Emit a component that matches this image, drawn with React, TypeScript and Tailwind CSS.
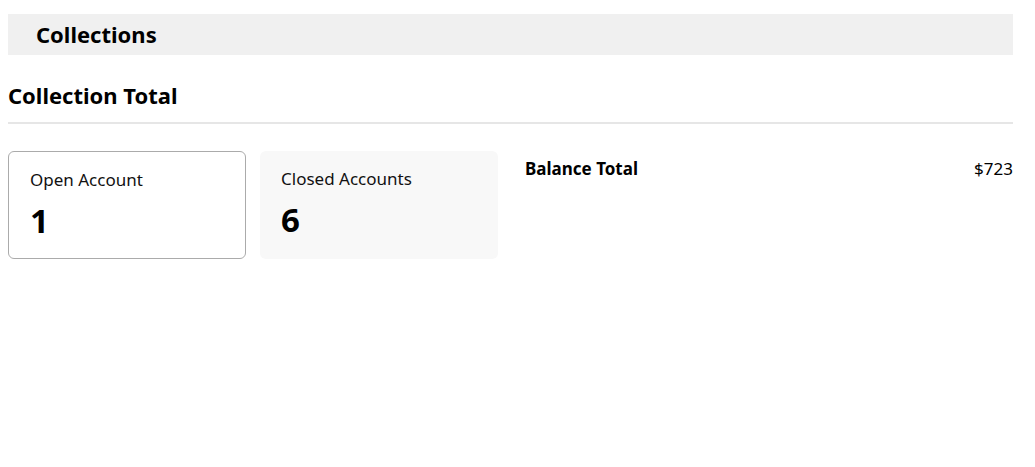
import React from 'react';

const StatCard: React.FC<{ label: string; value: string; outlined?: boolean }> = ({ label, value, outlined }) => (
    <div
        className={
            outlined
                ? 'w-[238px] h-[108px] rounded-md border border-[#ababab] bg-white px-[21px] pt-[15px]'
                : 'w-[238px] h-[108px] rounded-md bg-[#f8f8f8] px-[21px] pt-[15px]'
        }
    >
        <div className="text-[17px] leading-[26px] text-[#111]">{label}</div>
        <div className="mt-[8px] text-[33px] leading-[40px] font-bold text-black">{value}</div>
    </div>
);

export default function App() {
    return (
        <div className="min-h-screen bg-white pl-[8px] pr-[22px] pt-[14px] text-black" style={{ fontFamily: '"Noto Sans", sans-serif' }}>
            {/* Section header */}
            <div className="h-[41px] bg-[#f0f0f0] pl-[28px] flex items-center">
                <h2 className="text-[22px] font-bold">Collections</h2>
            </div>

            <h3 className="mt-[25px] text-[22px] leading-[30px] font-bold">Collection Total</h3>
            <div className="mt-[12px] h-[2px] bg-[#e6e6e6]" />

            <div className="mt-[27px] flex">
                <StatCard label="Open Account" value="1" outlined />
                <div className="ml-[14px]">
                    <StatCard label="Closed Accounts" value="6" />
                </div>
                <div className="ml-[27px] flex-1 flex justify-between pt-[6px]">
                    <span className="text-[17px] leading-[24px] font-bold">Balance Total</span>
                    <span className="text-[17px] leading-[24px]">$723</span>
                </div>
            </div>
        </div>
    );
}
